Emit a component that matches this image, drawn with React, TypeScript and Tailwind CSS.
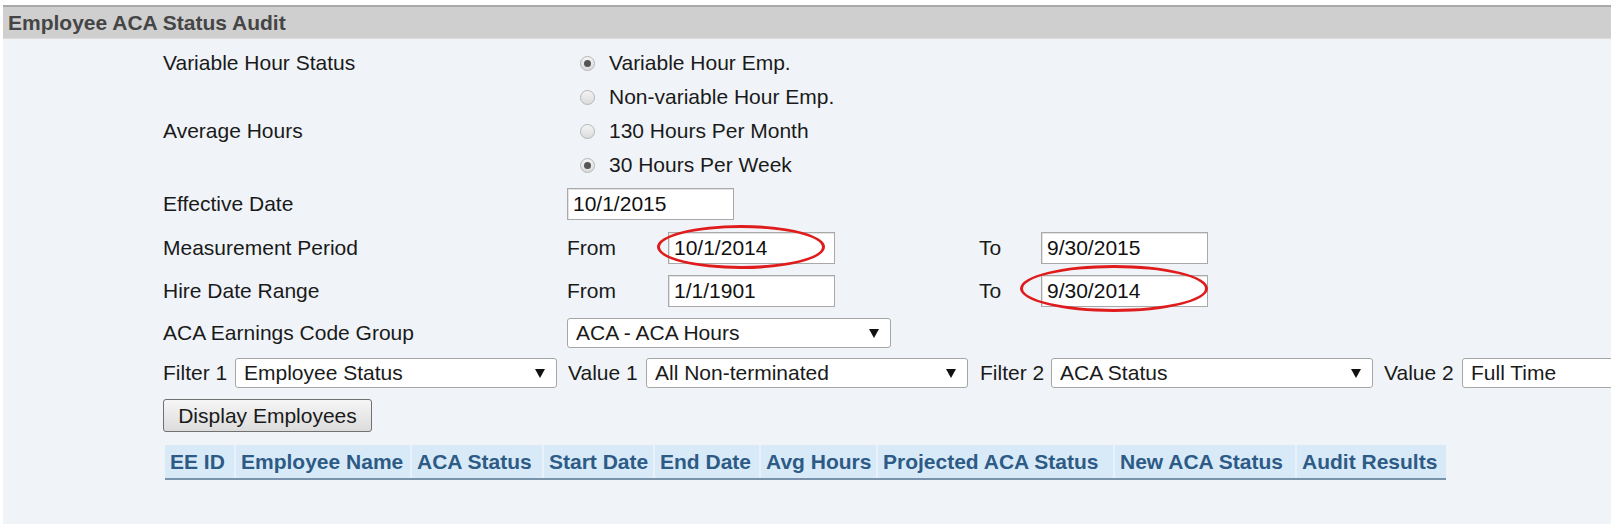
import React from 'react';

const font = { fontFamily: '"Liberation Sans", Arial, sans-serif' };

function Radio({ checked, label }: { checked?: boolean; label: string }) {
    return (
        <div className="flex items-center h-[34px]">
            <span className="ml-[13px] w-[15px] h-[15px] rounded-full border border-[#b5b5b5] bg-gradient-to-b from-[#f4f4f4] to-[#dcdcdc] flex items-center justify-center">
                {checked && <span className="w-[7px] h-[7px] rounded-full bg-[#555]" />}
            </span>
            <span className="ml-[14px]">{label}</span>
        </div>
    );
}

function TextBox({ value, w = 'w-[167px]' }: { value: string; w?: string }) {
    return (
        <div className={`${w} h-[32px] bg-white border border-[#a9a9a9] shadow-[inset_1px_1px_0_#e3e3e3] flex items-center pl-[5px] text-[#111]`}>
            {value}
        </div>
    );
}

function Select({ value, w = 'w-[322px]' }: { value: string; w?: string }) {
    return (
        <div className={`${w} shrink-0 h-[30px] bg-white border border-[#a6a6a6] rounded-[3px] flex items-center pl-[8px] pr-[11px]`}>
            <span className="flex-1 truncate">{value}</span>
            <svg width="10" height="10" viewBox="0 0 10 10">
                <polygon points="0,1 10,1 5,10" fill="#111" />
            </svg>
        </div>
    );
}

export default function App() {
    const cols = [
        ['EE ID', 'w-[71px]'],
        ['Employee Name', 'w-[176px]'],
        ['ACA Status', 'w-[132px]'],
        ['Start Date', 'w-[111px]'],
        ['End Date', 'w-[106px]'],
        ['Avg Hours', 'w-[117px]'],
        ['Projected ACA Status', 'w-[237px]'],
        ['New ACA Status', 'w-[182px]'],
        ['Audit Results', 'w-[149px]'],
    ];

    return (
        <div className="w-[1616px] h-[524px] bg-white pl-[3px] pr-[5px] pt-[5px]" style={font}>
            <div className="h-[519px] bg-[#f0f4f8] border-t-2 border-[#a9a9a9] overflow-hidden relative text-[21px] text-[#1a1a1a]">
                {/* Title bar */}
                <div className="h-[32px] bg-[#cfcfd0] border-b border-[#dcdcdc] flex items-center pl-[5px] text-[21px] font-bold text-[#454545]">
                    Employee ACA Status Audit
                </div>

                <div className="pl-[160px] pt-[7px]">
                    {/* Variable hour status */}
                    <div className="flex">
                        <div className="w-[404px] h-[34px] flex items-center">Variable Hour Status</div>
                        <div>
                            <Radio checked label="Variable Hour Emp." />
                            <Radio label="Non-variable Hour Emp." />
                        </div>
                    </div>
                    {/* Average hours */}
                    <div className="flex">
                        <div className="w-[404px] h-[34px] flex items-center">Average Hours</div>
                        <div>
                            <Radio label="130 Hours Per Month" />
                            <Radio checked label="30 Hours Per Week" />
                        </div>
                    </div>

                    <div className="flex items-center h-[44px]">
                        <div className="w-[404px]">Effective Date</div>
                        <TextBox value="10/1/2015" />
                    </div>

                    <div className="flex items-center h-[43px]">
                        <div className="w-[404px]">Measurement Period</div>
                        <div className="w-[412px] flex items-center">
                            <span className="w-[101px]">From</span>
                            <TextBox value="10/1/2014" />
                        </div>
                        <span className="w-[62px]">To</span>
                        <TextBox value="9/30/2015" />
                    </div>

                    <div className="flex items-center h-[44px]">
                        <div className="w-[404px]">Hire Date Range</div>
                        <div className="w-[412px] flex items-center">
                            <span className="w-[101px]">From</span>
                            <TextBox value="1/1/1901" />
                        </div>
                        <span className="w-[62px]">To</span>
                        <TextBox value="9/30/2014" />
                    </div>

                    <div className="flex items-center h-[39px]">
                        <div className="w-[404px]">ACA Earnings Code Group</div>
                        <Select value="ACA - ACA Hours" w="w-[324px]" />
                    </div>

                    {/* Filters */}
                    <div className="flex items-center h-[42px] whitespace-nowrap">
                        <span className="w-[72px] shrink-0">Filter 1</span>
                        <Select value="Employee Status" />
                        <span className="w-[78px] shrink-0 ml-[11px]">Value 1</span>
                        <Select value="All Non-terminated" />
                        <span className="w-[71px] shrink-0 ml-[12px]">Filter 2</span>
                        <Select value="ACA Status" />
                        <span className="w-[78px] shrink-0 ml-[11px]">Value 2</span>
                        <Select value="Full Time" />
                    </div>

                    <button className="mt-[5px] h-[33px] w-[209px] border border-[#707070] rounded-[3px] bg-gradient-to-b from-[#f6f6f6] to-[#dcdcdc] text-[21px] text-[#1a1a1a] flex items-center justify-center">
                        Display Employees
                    </button>

                    {/* Results header */}
                    <div className="mt-[13px] ml-[2px] flex w-fit h-[35px] border-b-2 border-[#7993ad]">
                        {cols.map(([label, w]) => (
                            <div
                                key={label}
                                className={`${w} shrink-0 bg-[#d8eaf8] border-r-2 border-[#e9f2fa] last:border-r-0 flex items-center pl-[5px] font-bold text-[#2d5b86] whitespace-nowrap`}
                            >
                                {label}
                            </div>
                        ))}
                    </div>
                </div>

                {/* Red annotation ellipses */}
                <div className="absolute left-[654px] top-[218px] w-[168px] h-[44px] rounded-[50%] border-[3px] border-[#e01b1b]" />
                <div className="absolute left-[1017px] top-[258px] w-[188px] h-[47px] rounded-[50%] border-[3px] border-[#e01b1b]" />
            </div>
        </div>
    );
}
